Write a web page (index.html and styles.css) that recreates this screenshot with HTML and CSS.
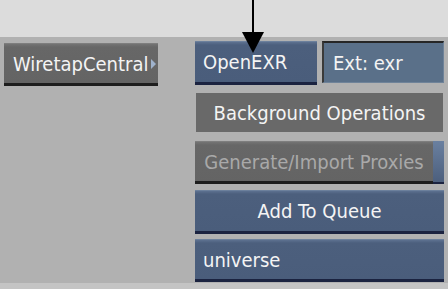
FILE: index.html
```html
<!DOCTYPE html>
<html lang="en">
<head>
    <meta charset="UTF-8">
    <title>Export Settings</title>
    <link rel="stylesheet" href="styles.css">
</head>
<body>
    <div class="topbar"></div>

    <div class="panel">
        <div class="left-col">
            <div class="btn btn-gray btn-menu">WiretapCentral<span class="menu-tri"></span></div>
        </div>

        <div class="right-col">
            <div class="row row-format">
                <div class="btn btn-blue btn-half">OpenEXR</div>
                <div class="field">Ext: exr</div>
            </div>
            <div class="btn btn-flat row-bg">Background Operations</div>
            <div class="row row-proxies">
                <div class="btn btn-gray btn-disabled">Generate/Import Proxies</div>
                <div class="side-strip"></div>
            </div>
            <div class="btn btn-blue btn-center row-queue">Add To Queue</div>
            <div class="btn btn-blue row-universe">universe</div>
        </div>
    </div>

    <div class="bottombar"></div>

    <!-- callout arrow pointing at the format button -->
    <svg class="callout" width="24" height="54" viewBox="0 0 24 54">
        <line x1="11" y1="0" x2="11" y2="34" stroke="#000" stroke-width="2"/>
        <polygon points="0,32 22,32 11,53" fill="#000"/>
    </svg>
</body>
</html>
```

FILE: styles.css
```css
body {
    margin: 0;
    width: 448px;
    height: 289px;
    overflow: hidden;
    position: relative;
    background-color: #b1b1b1;
    font-family: "DejaVu Sans Condensed", "DejaVu Sans", sans-serif;
    font-stretch: condensed;
    font-size: 20px;
    color: #f4f4f4;
}

.topbar {
    height: 37px;
    background-color: #dcdcdc;
}

.bottombar {
    height: 6px;
    background-color: #c4c4c4;
}

.panel {
    display: flex;
    height: 246px;
}

.left-col {
    padding: 6px 0 0 4px;
    width: 195px;
    box-sizing: border-box;
}

.right-col {
    display: flex;
    flex-direction: column;
    padding-top: 4px;
    width: 249px;
}

.row {
    display: flex;
}

.btn {
    box-sizing: border-box;
    display: flex;
    align-items: center;
    padding: 0 8px;
    white-space: nowrap;
}

.btn-gray {
    background: linear-gradient(#747474 0, #676767 3px, #646464);
    border-top: 1px solid #7e7e7e;
    border-bottom: 3px solid #1e1e1e;
}

.btn-blue {
    background: linear-gradient(#5d7190 0, #4c5f7d 3px, #4a5d7b);
    border-top: 1px solid #6c809c;
    border-bottom: 3px solid #1b2340;
}

.btn-flat {
    background-color: #696969;
    justify-content: center;
}

.btn-center {
    justify-content: center;
}

.btn-menu {
    width: 154px;
    height: 43px;
    padding-left: 9px;
    position: relative;
}

.menu-tri {
    position: absolute;
    right: 2px;
    top: 15px;
    width: 0;
    height: 0;
    border-top: 5px solid transparent;
    border-bottom: 5px solid transparent;
    border-left: 5px solid #9fb2cc;
}

.row-format {
    height: 44px;
}

.btn-half {
    width: 122px;
    height: 44px;
}

.field {
    box-sizing: border-box;
    width: 122px;
    height: 42px;
    margin-left: 5px;
    padding-left: 9px;
    display: flex;
    align-items: center;
    background-color: #5a7089;
    border-top: 2px solid #262626;
    border-left: 2px solid #3a3a3a;
    border-right: 1px solid #6f8399;
    border-bottom: 1px solid #6f8399;
}

.row-bg {
    height: 39px;
    margin: 8px 1px 0 1px;
}

.row-proxies {
    height: 43px;
    margin-top: 9px;
}

.btn-disabled {
    width: 238px;
    height: 43px;
    justify-content: center;
    color: #a9a9a9;
}

.side-strip {
    width: 11px;
    height: 43px;
    box-sizing: border-box;
    background: linear-gradient(#6a80a0, #4c5f7d);
    border-bottom: 2px solid #1b2340;
}

.row-queue {
    height: 44px;
    margin-top: 6px;
}

.row-universe {
    height: 43px;
    margin-top: 5px;
}

.callout {
    position: absolute;
    left: 242px;
    top: 0;
}
```
